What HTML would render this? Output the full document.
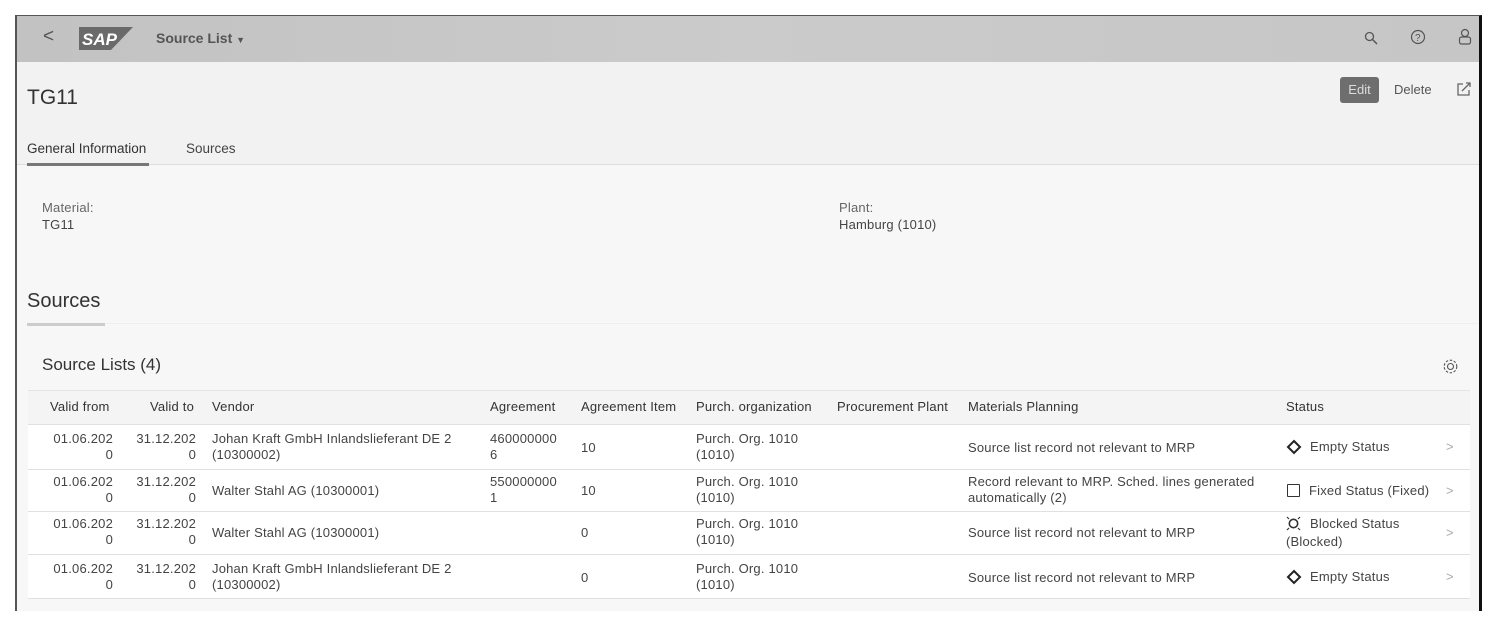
<!DOCTYPE html>
<html><head><meta charset="utf-8"><style>
*{margin:0;padding:0;box-sizing:border-box}
body{width:1497px;height:628px;background:#fff;font-family:"Liberation Sans",sans-serif;color:#333;position:relative;overflow:hidden}
.a{position:absolute;white-space:nowrap}
.frame{position:absolute;left:15px;top:15px;width:1467px;height:596px;border-left:2px solid #555;border-top:1px solid #555;border-right:3px solid #111;background:#f7f7f7}
.sm{font-size:13px;color:#444;letter-spacing:0.2px}
.r{text-align:right}
.row{position:absolute;left:28px;width:1442px;border-bottom:1px solid #e0e0e0;background:#fff}
</style></head><body>
<div class="frame"></div>
<div class="a" style="left:17px;top:16px;width:1462px;height:46px;background:linear-gradient(90deg,#c2c2c2,#cbcbcb 50%,#c6c6c6)"></div>
<div class="a" style="left:17px;top:62px;width:1462px;height:103px;background:#f2f2f2;border-bottom:1px solid #ddd"></div>
<div class="a" style="left:43px;top:26px;font-size:19px;color:#555">&lt;</div>
<svg class="a" style="left:79px;top:27px" width="54" height="23"><polygon points="0,0 54,0 32,23 0,23" fill="#6a6a6a"/><text x="3" y="18" font-family="Liberation Sans" font-weight="bold" font-style="italic" font-size="17" fill="#fff">SAP</text></svg>
<div class="a" style="left:156px;top:30px;font-size:14px;font-weight:bold;color:#555">Source List <span style="font-size:9px">▼</span></div>
<svg class="a" style="left:1364px;top:31px" width="14" height="14"><circle cx="5.5" cy="5.5" r="4" fill="none" stroke="#555" stroke-width="1.3"/><line x1="8.5" y1="8.5" x2="13" y2="13" stroke="#555" stroke-width="1.5"/></svg>
<svg class="a" style="left:1410px;top:29px" width="16" height="16"><circle cx="8" cy="8" r="6.5" fill="none" stroke="#555" stroke-width="1.2"/><text x="5" y="12" font-size="10" fill="#555" font-family="Liberation Sans">?</text></svg>
<svg class="a" style="left:1458px;top:28px" width="14" height="18"><circle cx="7" cy="5" r="3.5" fill="none" stroke="#555" stroke-width="1.2"/><rect x="1.5" y="9" width="11" height="7" rx="2" fill="none" stroke="#555" stroke-width="1.2"/></svg>
<div class="a" style="left:27px;top:86px;font-size:21px;color:#333">TG11</div>
<div class="a" style="left:1340px;top:77px;width:39px;height:26px;background:#6e6e6e;border-radius:3px;color:#ddd;font-size:13px;line-height:26px;text-align:center">Edit</div>
<div class="a" style="left:1394px;top:82px;font-size:13px;color:#555">Delete</div>
<svg class="a" style="left:1456px;top:81px" width="17" height="16"><path d="M7 3H2v11h11V9" fill="none" stroke="#666" stroke-width="1.3"/><path d="M6 10l8-8M10 2h4v4" fill="none" stroke="#666" stroke-width="1.3"/></svg>
<div class="a" style="left:27px;top:141px;font-size:13.5px;color:#333">General Information</div>
<div class="a" style="left:186px;top:141px;font-size:13.5px;color:#444">Sources</div>
<div class="a" style="left:27px;top:163px;width:122px;height:3px;background:#777"></div>
<div class="a sm" style="left:42px;top:200px;color:#666">Material:</div>
<div class="a sm" style="left:42px;top:217px">TG11</div>
<div class="a sm" style="left:839px;top:200px;color:#666">Plant:</div>
<div class="a sm" style="left:839px;top:217px">Hamburg (1010)</div>
<div class="a" style="left:27px;top:290px;font-size:20px;color:#333">Sources</div>
<div class="a" style="left:27px;top:323px;width:1452px;height:1px;background:#eee"></div>
<div class="a" style="left:27px;top:323px;width:78px;height:3px;background:#ccc"></div>
<div class="a" style="left:42px;top:355px;font-size:17px;color:#333">Source Lists (4)</div>
<svg class="a" style="left:1442px;top:358px" width="17" height="17"><circle cx="8.5" cy="8.5" r="3" fill="none" stroke="#555" stroke-width="1.1"/><circle cx="8.5" cy="8.5" r="6.3" fill="none" stroke="#555" stroke-width="1.1" stroke-dasharray="2.5 1.6"/></svg>
<div class="row" style="top:390px;height:35px;background:#f4f4f4;border-top:1px solid #e3e3e3"></div>
<div class="a sm" style="top:399px;left:50px;color:#333">Valid from</div>
<div class="a sm" style="top:399px;left:150px;color:#333">Valid to</div>
<div class="a sm" style="top:399px;left:212px;color:#333">Vendor</div>
<div class="a sm" style="top:399px;left:490px;color:#333">Agreement</div>
<div class="a sm" style="top:399px;left:581px;color:#333">Agreement Item</div>
<div class="a sm" style="top:399px;left:696px;color:#333">Purch. organization</div>
<div class="a sm" style="top:399px;left:837px;color:#333">Procurement Plant</div>
<div class="a sm" style="top:399px;left:968px;color:#333">Materials Planning</div>
<div class="a sm" style="top:399px;left:1286px;color:#333">Status</div>

<div class="row" style="top:425px;height:45px"></div>
<div class="row" style="top:470px;height:42px"></div>
<div class="row" style="top:512px;height:43px"></div>
<div class="row" style="top:555px;height:44px"></div>

<!-- row1 -->
<div class="a sm r" style="top:431px;left:30px;width:83px;line-height:16px">01.06.202<br>0</div>
<div class="a sm r" style="top:431px;left:116px;width:80px;line-height:16px">31.12.202<br>0</div>
<div class="a sm" style="top:431px;left:212px;line-height:16px">Johan Kraft GmbH Inlandslieferant DE 2<br>(10300002)</div>
<div class="a sm" style="top:431px;left:490px;line-height:16px">460000000<br>6</div>
<div class="a sm" style="top:440px;left:581px">10</div>
<div class="a sm" style="top:431px;left:696px;line-height:16px">Purch. Org. 1010<br>(1010)</div>
<div class="a sm" style="top:440px;left:968px">Source list record not relevant to MRP</div>
<svg class="a" style="left:1286px;top:439px" width="16" height="16"><path d="M8 2L14 8L8 14L2 8Z" fill="none" stroke="#222" stroke-width="2"/></svg>
<div class="a sm" style="top:439px;left:1310px">Empty Status</div>
<div class="a sm" style="top:439px;left:1446px;color:#aaa">&gt;</div>
<!-- row2 -->
<div class="a sm r" style="top:474px;left:30px;width:83px;line-height:16px">01.06.202<br>0</div>
<div class="a sm r" style="top:474px;left:116px;width:80px;line-height:16px">31.12.202<br>0</div>
<div class="a sm" style="top:483px;left:212px">Walter Stahl AG (10300001)</div>
<div class="a sm" style="top:474px;left:490px;line-height:16px">550000000<br>1</div>
<div class="a sm" style="top:483px;left:581px">10</div>
<div class="a sm" style="top:474px;left:696px;line-height:16px">Purch. Org. 1010<br>(1010)</div>
<div class="a sm" style="top:474px;left:968px;line-height:16px">Record relevant to MRP. Sched. lines generated<br>automatically (2)</div>
<div class="a" style="top:484px;left:1287px;width:13px;height:13px;border:1.5px solid #333;border-radius:1px"></div>
<div class="a sm" style="top:483px;left:1309px">Fixed Status (Fixed)</div>
<div class="a sm" style="top:483px;left:1446px;color:#aaa">&gt;</div>
<!-- row3 -->
<div class="a sm r" style="top:516px;left:30px;width:83px;line-height:16px">01.06.202<br>0</div>
<div class="a sm r" style="top:516px;left:116px;width:80px;line-height:16px">31.12.202<br>0</div>
<div class="a sm" style="top:525px;left:212px">Walter Stahl AG (10300001)</div>
<div class="a sm" style="top:525px;left:581px">0</div>
<div class="a sm" style="top:516px;left:696px;line-height:16px">Purch. Org. 1010<br>(1010)</div>
<div class="a sm" style="top:525px;left:968px">Source list record not relevant to MRP</div>
<svg class="a" style="left:1286px;top:516px" width="15" height="15"><circle cx="7.5" cy="7.5" r="4.2" fill="none" stroke="#333" stroke-width="1.6"/><path d="M1 1l2 2M14 1l-2 2M1 14l2-2M14 14l-2-2" stroke="#333" stroke-width="1.2"/></svg>
<div class="a sm" style="top:516px;left:1310px">Blocked Status</div>
<div class="a sm" style="top:534px;left:1286px">(Blocked)</div>
<div class="a sm" style="top:525px;left:1446px;color:#aaa">&gt;</div>
<!-- row4 -->
<div class="a sm r" style="top:561px;left:30px;width:83px;line-height:16px">01.06.202<br>0</div>
<div class="a sm r" style="top:561px;left:116px;width:80px;line-height:16px">31.12.202<br>0</div>
<div class="a sm" style="top:561px;left:212px;line-height:16px">Johan Kraft GmbH Inlandslieferant DE 2<br>(10300002)</div>
<div class="a sm" style="top:570px;left:581px">0</div>
<div class="a sm" style="top:561px;left:696px;line-height:16px">Purch. Org. 1010<br>(1010)</div>
<div class="a sm" style="top:570px;left:968px">Source list record not relevant to MRP</div>
<svg class="a" style="left:1286px;top:569px" width="16" height="16"><path d="M8 2L14 8L8 14L2 8Z" fill="none" stroke="#222" stroke-width="2"/></svg>
<div class="a sm" style="top:569px;left:1310px">Empty Status</div>
<div class="a sm" style="top:569px;left:1446px;color:#aaa">&gt;</div>
</body></html>
